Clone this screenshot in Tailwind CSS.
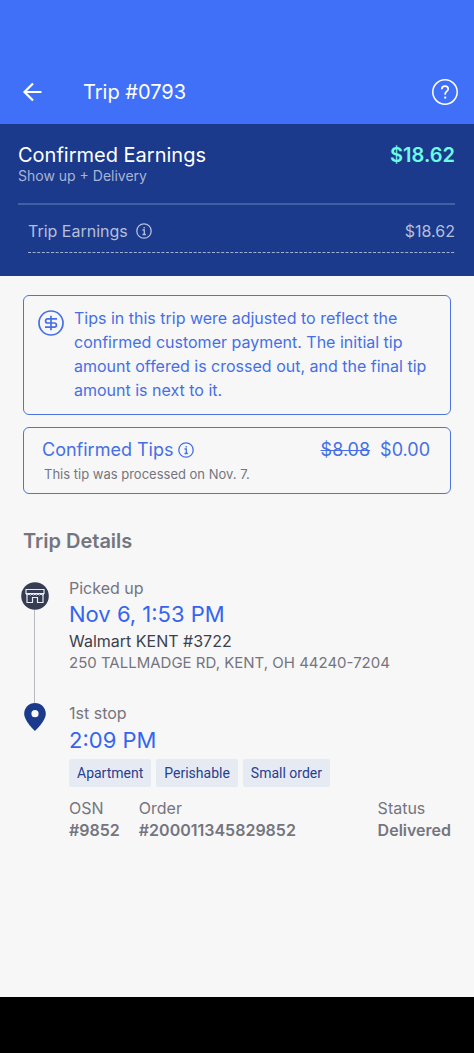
<!DOCTYPE html>
<html lang="en">
<head>
<meta charset="utf-8">
<meta name="viewport" content="width=device-width, initial-scale=1">
<title>Trip #0793</title>
<script src="https://cdn.jsdelivr.net/npm/@tailwindcss/browser@4"></script>
</head>
<body class="flex min-h-screen flex-col bg-[#f7f7f7] font-['Inter','Roboto',sans-serif] text-base leading-6 text-[#74757f]">
  <header class="flex h-31 items-end bg-[#4070f8] pr-4 pl-5 pb-5 text-white">
    <button type="button" aria-label="Back" class="mr-[39px] flex size-6 items-center justify-center">
      <svg class="size-6" viewBox="0 0 24 24" fill="none" stroke="currentColor" stroke-width="2.200"><path d="M21.500 12H4.500M13 3.500L4.500 12l8.500 8.500"/></svg>
    </button>
    <h1 class="flex-1 text-xl leading-6">Trip #0793</h1>
    <button type="button" aria-label="Help" class="flex h-6 items-center">
      <svg class="size-[26px]" viewBox="0 0 26 26" fill="none" stroke="currentColor"><circle cx="13" cy="13" r="12.200" stroke-width="1.500"/><path d="M9.800 10.300c0-1.900 1.400-3.200 3.200-3.200s3.200 1.200 3.200 2.900c0 2.200-3 2.500-3 4.800v.9" stroke-width="1.700"/><path d="M13.200 17.600v2" stroke-width="1.900"/></svg>
    </button>
  </header>

  <section class="bg-[#1b3a8c] pt-[19px] pr-[19px] pb-[23px] pl-[18px]">
    <div class="flex justify-between text-xl leading-6">
      <h2 class="text-white">Confirmed Earnings</h2>
      <p class="font-semibold text-[#6cfbe4]">$18.62</p>
    </div>
    <p class="text-sm leading-[18px] text-[#a8b4d6]">Show up + Delivery</p>
    <div class="mt-[18px] border-t-2 border-[#42609f]"></div>
    <div class="ml-2.5 flex items-center pt-3.5 pb-[9px] text-[#b5bfdb]">
      <span>Trip Earnings</span>
      <button type="button" aria-label="About trip earnings" class="ml-2">
        <svg class="size-4" viewBox="0 0 16 16" fill="none" stroke="currentColor" stroke-width="1.300"><circle cx="8" cy="8" r="7.200"/><path d="M6.500 7H8.300v4.500M6.500 11.500h3.400M8.200 4v1.600"/></svg>
      </button>
      <span class="ml-auto">$18.62</span>
    </div>
    <svg class="ml-2.5 block h-px w-[calc(100%-10px)]" aria-hidden="true"><path d="M0 .5H1000" stroke="#a3b0d5" stroke-dasharray="3 1.600"/></svg>
  </section>

  <main class="flex-1 px-[23px] pt-[19px]">
    <section class="flex items-start gap-2.5 rounded-md border border-[#4c75dc] px-3.5 pt-2.5 pb-3 text-[#466fe6]">
      <svg class="mt-1 size-[26px] shrink-0" viewBox="0 0 26 26" fill="none" stroke="currentColor" stroke-width="1.700"><circle cx="13" cy="13" r="12"/><path d="M19 8.800H9.700a2.100 2.100 0 0 0 0 4.200h6.600a2.100 2.100 0 0 1 0 4.200H7M13 5.800v14.400"/></svg>
      <p class="flex-1">Tips in this trip were adjusted to reflect the confirmed customer payment. The initial tip amount offered is crossed out, and the final tip amount is next to it.</p>
    </section>

    <section class="mt-3 rounded-md border border-[#4c75dc] pt-2.5 pr-5 pb-[9px] pl-[18px]">
      <div class="flex items-center text-lg leading-6 text-[#466fe6]">
        <h2>Confirmed Tips</h2>
        <button type="button" aria-label="About confirmed tips" class="ml-1">
          <svg class="size-4" viewBox="0 0 16 16" fill="none" stroke="currentColor" stroke-width="1.300"><circle cx="8" cy="8" r="7.200"/><path d="M6.500 7H8.300v4.500M6.500 11.500h3.400M8.200 4v1.600"/></svg>
        </button>
        <del class="ml-auto decoration-1">$8.08</del>
        <span class="ml-2.5">$0.00</span>
      </div>
      <p class="mt-0.5 pl-0.5 text-[13px] leading-5">This tip was processed on Nov. 7.</p>
    </section>

    <h2 class="mt-[35px] text-xl leading-6 font-semibold">Trip Details</h2>

    <ol class="mt-[23px]">
      <li class="flex gap-[21px]">
        <div class="-ml-0.5 flex w-[27px] shrink-0 flex-col items-center pt-1.5">
          <svg class="size-7 shrink-0" viewBox="0 0 28 28" fill="none" stroke="#e8edf8" stroke-width="1.200"><circle cx="14" cy="14" r="13.800" fill="#363d52" stroke="none"/><path d="M5 7.500h18v4H5zM6 12v8.500h5.500v-5h5v5H22V12"/><path d="M5 12.200q1.500 1.600 3 0q1.500 1.600 3 0q1.500 1.600 3 0q1.500 1.600 3 0q1.500 1.600 3 0q1.500 1.600 3 0" stroke-width="1"/></svg>
          <div class="w-px flex-1 bg-[#b9babf]"></div>
        </div>
        <div class="pb-[27px]">
          <p>Picked up</p>
          <p class="text-[22px] leading-7 text-[#3565ee]">Nov 6, 1:53 PM</p>
          <p class="mt-0.5 leading-[22px] text-[#3b3f4e]">Walmart KENT #3722</p>
          <p class="text-[15px] leading-[22px]">250 TALLMADGE RD, KENT, OH 44240-7204</p>
        </div>
      </li>
      <li class="flex gap-[21px]">
        <div class="-ml-0.5 flex w-[27px] shrink-0 flex-col items-center">
          <div class="h-0.5 w-px bg-[#b9babf]"></div>
          <svg class="h-7 w-[22px] shrink-0" viewBox="0 0 22 28" fill="#1b3a8c"><path fill-rule="evenodd" d="M11 0C4.900 0 .2 4.700.2 10.700C.2 18 11 28 11 28s10.800-10 10.800-17.300C21.800 4.700 17.100 0 11 0zm0 14.300a3.600 3.600 0 1 1 0-7.200a3.600 3.600 0 0 1 0 7.200z"/></svg>
        </div>
        <div class="min-w-0 flex-1">
          <p>1st stop</p>
          <p class="mt-px text-[22px] leading-7 text-[#3565ee]">2:09 PM</p>
          <ul class="mt-[5px] flex gap-[5px] font-['Roboto',sans-serif] text-sm leading-7 text-[#26408f]">
            <li class="rounded-xs bg-[#e6ebf3] px-2">Apartment</li>
            <li class="rounded-xs bg-[#e6ebf3] px-2">Perishable</li>
            <li class="rounded-xs bg-[#e6ebf3] px-2">Small order</li>
          </ul>
          <dl class="mt-2.5 flex leading-[22px]">
            <div class="mr-[19px]"><dt>OSN</dt><dd class="font-semibold">#9852</dd></div>
            <div><dt>Order</dt><dd class="font-semibold">#200011345829852</dd></div>
            <div class="ml-auto"><dt>Status</dt><dd class="font-semibold">Delivered</dd></div>
          </dl>
        </div>
      </li>
    </ol>
  </main>
  <footer class="h-14 bg-black"></footer>
</body>
</html>
